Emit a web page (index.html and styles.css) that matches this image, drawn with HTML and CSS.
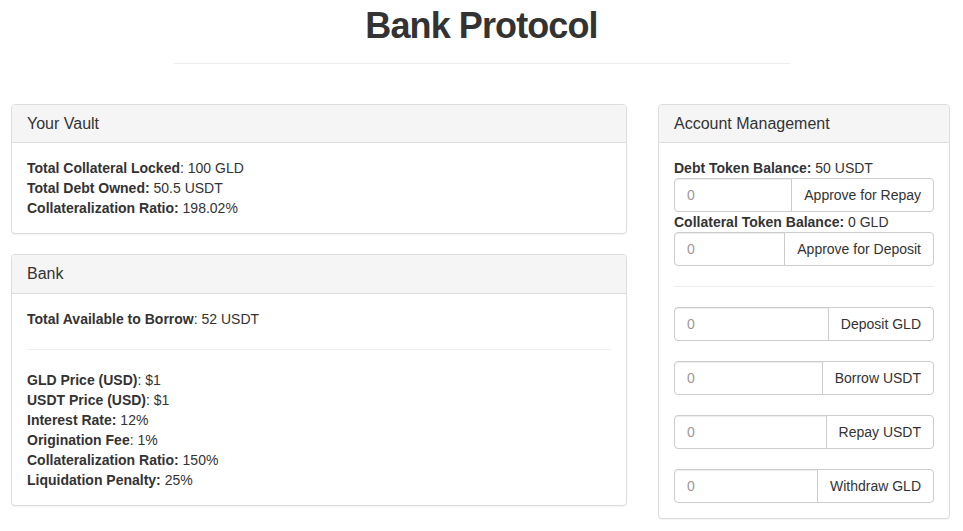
FILE: index.html
```html
<!DOCTYPE html>
<html>
<head>
<meta charset="utf-8">
<title>Bank Protocol</title>
<link rel="stylesheet" href="styles.css">
</head>
<body>
<header class="page-header">
  <h1 class="title">Bank Protocol</h1>
  <hr class="title-rule">
</header>
<main class="layout">
  <section class="col-main">
    <div class="panel">
      <div class="panel-heading"><h3 class="panel-title">Your Vault</h3></div>
      <div class="panel-body">
        <div class="line"><strong>Total Collateral Locked</strong>: 100 GLD</div>
        <div class="line"><strong>Total Debt Owned:</strong> 50.5 USDT</div>
        <div class="line"><strong>Collateralization Ratio:</strong> 198.02%</div>
      </div>
    </div>
    <div class="panel">
      <div class="panel-heading"><h3 class="panel-title">Bank</h3></div>
      <div class="panel-body">
        <div class="line"><strong>Total Available to Borrow</strong>: 52 USDT</div>
        <hr class="divider">
        <div class="line"><strong>GLD Price (USD)</strong>: $1</div>
        <div class="line"><strong>USDT Price (USD)</strong>: $1</div>
        <div class="line"><strong>Interest Rate:</strong> 12%</div>
        <div class="line"><strong>Origination Fee</strong>: 1%</div>
        <div class="line"><strong>Collateralization Ratio:</strong> 150%</div>
        <div class="line"><strong>Liquidation Penalty:</strong> 25%</div>
      </div>
    </div>
  </section>
  <section class="col-side">
    <div class="panel">
      <div class="panel-heading"><h3 class="panel-title">Account Management</h3></div>
      <div class="panel-body">
        <div class="line"><strong>Debt Token Balance:</strong> 50 USDT</div>
        <div class="input-group">
          <input class="form-control" type="text" placeholder="0">
          <button class="btn" type="button">Approve for Repay</button>
        </div>
        <div class="line"><strong>Collateral Token Balance:</strong> 0 GLD</div>
        <div class="input-group">
          <input class="form-control" type="text" placeholder="0">
          <button class="btn" type="button">Approve for Deposit</button>
        </div>
        <hr class="divider">
        <div class="action-list">
          <div class="input-group">
            <input class="form-control" type="text" placeholder="0">
            <button class="btn" type="button">Deposit GLD</button>
          </div>
          <div class="input-group">
            <input class="form-control" type="text" placeholder="0">
            <button class="btn" type="button">Borrow USDT</button>
          </div>
          <div class="input-group">
            <input class="form-control" type="text" placeholder="0">
            <button class="btn" type="button">Repay USDT</button>
          </div>
          <div class="input-group">
            <input class="form-control" type="text" placeholder="0">
            <button class="btn" type="button">Withdraw GLD</button>
          </div>
        </div>
      </div>
    </div>
  </section>
</main>
</body>
</html>
```

FILE: styles.css
```css
* { box-sizing: border-box; }

html, body {
  margin: 0;
  padding: 0;
  background: #fff;
}

body {
  font-family: "Liberation Sans", Arial, Helvetica, sans-serif;
  font-size: 14px;
  line-height: 20px;
  color: #333;
}

.page-header {
  text-align: center;
}

.title {
  margin: 6px 0 0;
  font-size: 36px;
  line-height: 39.6px;
  font-weight: 700;
  letter-spacing: -0.9px;
  color: #333;
}

.title-rule {
  width: 616px;
  margin: 17px auto 40px;
  border: 0;
  border-top: 1px solid #eee;
  height: 0;
}

.layout {
  display: grid;
  grid-template-columns: 616px 292px;
  column-gap: 31px;
  margin-left: 11px;
  align-items: start;
}

.panel {
  background: #fff;
  border: 1px solid #ddd;
  border-radius: 4px;
  box-shadow: 0 1px 1px rgba(0, 0, 0, 0.05);
  margin-bottom: 20px;
}

.panel-heading {
  background: #f5f5f5;
  border-bottom: 1px solid #ddd;
  border-radius: 3px 3px 0 0;
  padding: 10px 15px;
}

.panel-title {
  margin: 0;
  font-size: 16px;
  line-height: 17.6px;
  font-weight: 400;
  color: #333;
}

.panel-body {
  padding: 15px;
}

.line strong {
  font-weight: 700;
}

.divider {
  border: 0;
  border-top: 1px solid #eee;
  height: 0;
  margin: 20px 0;
}

.action-list {
  display: flex;
  flex-direction: column;
  gap: 20px;
}

.input-group {
  display: flex;
  height: 34px;
}

.form-control {
  flex: 1 1 auto;
  min-width: 0;
  height: 34px;
  padding: 6px 12px;
  font-family: inherit;
  font-size: 14px;
  line-height: 20px;
  color: #555;
  background: #fff;
  border: 1px solid #ccc;
  border-radius: 4px 0 0 4px;
  box-shadow: inset 0 1px 1px rgba(0, 0, 0, 0.075);
  outline: none;
}

.form-control::placeholder {
  color: #999;
}

.btn {
  flex: 0 0 auto;
  height: 34px;
  margin-left: -1px;
  padding: 6px 12px;
  font-family: inherit;
  font-size: 14px;
  line-height: 20px;
  color: #333;
  background: #fff;
  border: 1px solid #ccc;
  border-radius: 0 4px 4px 0;
  white-space: nowrap;
  cursor: pointer;
}
```
